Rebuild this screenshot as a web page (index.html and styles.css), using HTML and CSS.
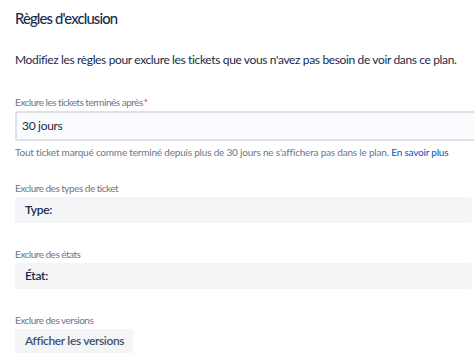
FILE: index.html
```html
<!DOCTYPE html>
<html lang="fr">
<head>
<meta charset="utf-8">
<link rel="stylesheet" href="styles.css">
</head>
<body>
<div class="page">
  <h1 class="title">Règles d'exclusion</h1>
  <p class="desc">Modifiez les règles pour exclure les tickets que vous n'avez pas besoin de voir dans ce plan.</p>

  <div class="field field-first">
    <div class="label">Exclure les tickets terminés après<span class="req">*</span></div>
    <div class="input">30 jours</div>
    <div class="help">Tout ticket marqué comme terminé depuis plus de 30 jours ne s'affichera pas dans le plan. <a class="link" href="#">En savoir plus</a></div>
  </div>

  <div class="field field-second">
    <div class="label">Exclure des types de ticket</div>
    <div class="select">Type:</div>
  </div>

  <div class="field">
    <div class="label">Exclure des états</div>
    <div class="select">État:</div>
  </div>

  <div class="field">
    <div class="label">Exclure des versions</div>
    <div class="button">Afficher les versions</div>
  </div>
</div>
</body>
</html>
```

FILE: styles.css
```css
html, body {
  margin: 0;
  padding: 0;
  background: #ffffff;
}
body {
  font-family: "Lato", "Noto Sans", sans-serif;
  color: #172b4d;
  width: 474px;
  overflow: hidden;
}
.page {
  padding: 5px 0 0 15px;
}
.title {
  margin: 0;
  font-size: 14.8px;
  font-weight: 500;
  letter-spacing: -0.85px;
  line-height: 26px;
  color: #172b4d;
}
.desc {
  margin: 19px 0 0 0;
  font-size: 12px;
  letter-spacing: -0.36px;
  line-height: 20px;
  color: #172b4d;
  white-space: nowrap;
}
.field {
  margin-top: 24px;
}
.field-first {
  margin-top: 25px;
}
.field-second {
  margin-top: 22px;
}
.label {
  font-size: 10px;
  letter-spacing: -0.5px;
  line-height: 14px;
  color: #6b778c;
  margin-bottom: 2px;
}
.req {
  color: #de350b;
  margin-left: 1px;
}
.input {
  box-sizing: border-box;
  height: 30px;
  margin-right: -4px;
  border: 2px solid #dfe1e6;
  border-radius: 3px;
  background: #fafbfc;
  font-size: 12px;
  letter-spacing: -0.3px;
  line-height: 26px;
  padding-left: 5px;
}
.help {
  margin-top: 4px;
  font-size: 10px;
  letter-spacing: -0.2px;
  line-height: 14px;
  color: #6b778c;
  white-space: nowrap;
}
.link {
  color: #0052cc;
  text-decoration: none;
}
.select {
  box-sizing: border-box;
  height: 26px;
  margin-right: 2px;
  background: #f4f5f7;
  border-radius: 3px;
  font-size: 12px;
  font-weight: 600;
  letter-spacing: -0.3px;
  line-height: 26px;
  padding-left: 10px;
  color: #172b4d;
}
.button {
  display: inline-block;
  box-sizing: border-box;
  width: 118px;
  height: 24px;
  background: #f4f5f7;
  border-radius: 3px;
  font-size: 12px;
  font-weight: 600;
  letter-spacing: -0.35px;
  line-height: 24px;
  padding: 0 0 0 10px;
  color: #42526e;
  white-space: nowrap;
}
```
